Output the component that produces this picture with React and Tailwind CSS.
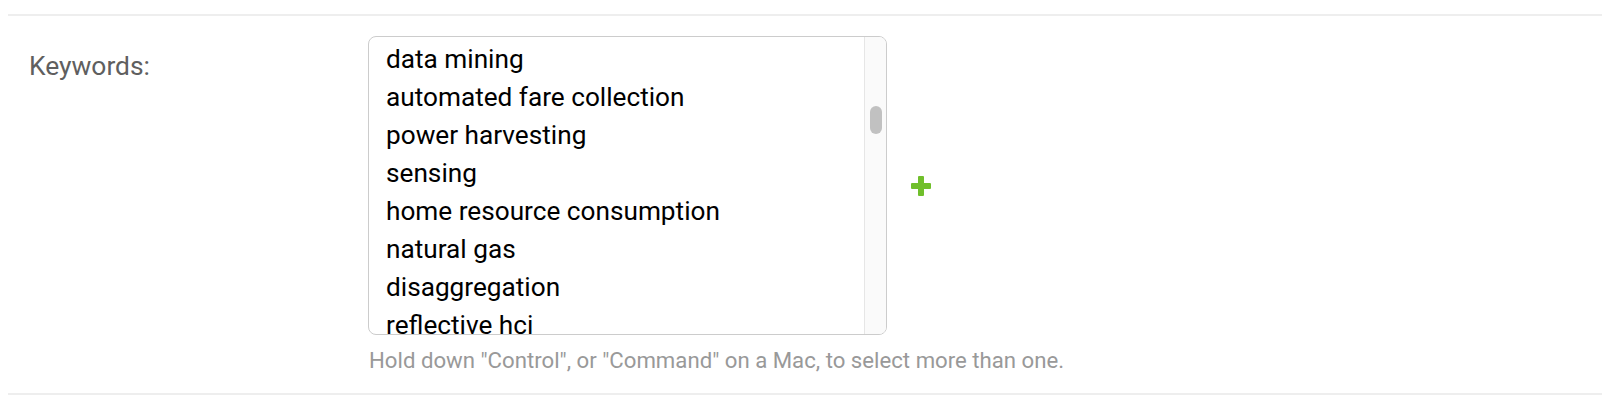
const keywords = [
  'data mining',
  'automated fare collection',
  'power harvesting',
  'sensing',
  'home resource consumption',
  'natural gas',
  'disaggregation',
  'reflective hci',
];

function PlusIcon() {
  return (
    <svg width="20" height="20" viewBox="0 0 20 20" fill="#70bf2b">
      <rect x="7" y="0" width="6" height="20" rx="1" />
      <rect x="0" y="7" width="20" height="6" rx="1" />
    </svg>
  );
}

export default function App() {
  return (
    <div className="h-[400px] w-full bg-white pt-[14px] font-['Roboto','Liberation_Sans',sans-serif]">
      <div className="ml-2 border-y-2 border-[#eeeeee] pt-[20px] pb-[20px] pl-[21px]">
        <div className="flex">
          {/* Label */}
          <label className="mt-[11px] w-[339px] shrink-0 text-[26.4px] leading-[38px] text-[#5f5f5f]">
            Keywords:
          </label>

          <div>
            <div className="flex items-center">
              {/* Multi select */}
              <div className="flex h-[299px] w-[519px] overflow-hidden rounded-[8px] border border-[#cccccc] bg-white">
                <ul className="flex-1 overflow-hidden pt-[3px] pl-[17px]">
                  {keywords.map((k) => (
                    <li key={k} className="h-[38px] text-[26.2px] leading-[38px] whitespace-nowrap text-black">
                      {k}
                    </li>
                  ))}
                </ul>
                <div className="flex w-[22px] shrink-0 justify-center border-l border-[#e6e6e6] bg-[#fafafa]">
                  <div className="mt-[69px] h-[28px] w-[12px] rounded-full bg-[#c1c1c1]" />
                </div>
              </div>

              <a className="ml-[24px] flex items-center">
                <PlusIcon />
              </a>
            </div>

            {/* Help text */}
            <p className="mt-[12px] ml-[1px] text-[22.2px] leading-[26px] whitespace-nowrap text-[#999999]">
              Hold down "Control", or "Command" on a Mac, to select more than one.
            </p>
          </div>
        </div>
      </div>
    </div>
  );
}
